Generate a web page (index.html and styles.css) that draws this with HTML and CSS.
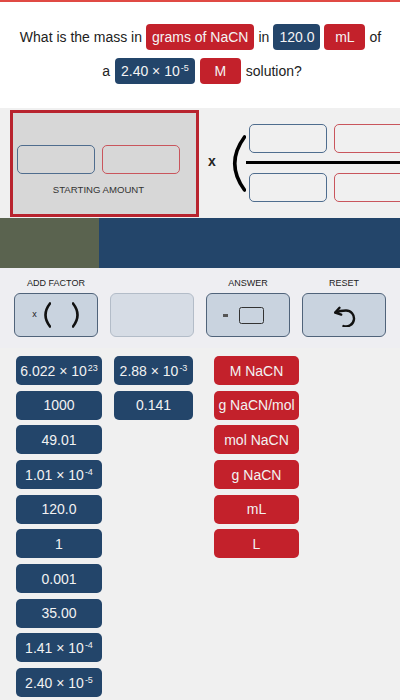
FILE: index.html
```
<!DOCTYPE html>
<html>
<head>
<meta charset="utf-8">
<link rel="stylesheet" href="styles.css">
</head>
<body>
<div class="topline"></div>
<div class="question">
  <div class="qline l1">
    <span>What is the mass in</span>
    <span class="chip red">grams of NaCN</span>
    <span>in</span>
    <span class="chip blue">120.0</span>
    <span class="chip red unit">mL</span>
    <span>of</span>
  </div>
  <div class="qline l2">
    <span>a</span>
    <span class="chip blue"><span>2.40 × 10<sup>-5</sup></span></span>
    <span class="chip red unit">M</span>
    <span>solution?</span>
  </div>
</div>

<div class="workspace">
  <div class="start">
    <div class="slots">
      <div class="slot b"></div>
      <div class="slot r"></div>
    </div>
    <div class="start-label">STARTING AMOUNT</div>
  </div>
  <div class="times">x</div>
  <svg class="paren" width="14" height="57" viewBox="0 0 14 57"><path d="M12.5 2 Q-7 28.5 12.5 55" fill="none" stroke="#000" stroke-width="3.6" stroke-linecap="round"/></svg>
  <div class="fraction">
    <div class="frow">
      <div class="slot b"></div>
      <div class="slot r"></div>
    </div>
    <div class="fline"></div>
    <div class="frow">
      <div class="slot b"></div>
      <div class="slot r"></div>
    </div>
  </div>
</div>

<div class="bar">
  <div class="bar-left"></div>
  <div class="bar-right"></div>
</div>

<div class="controls">
  <div class="ctl">
    <div class="ctl-label">ADD FACTOR</div>
    <div class="ctl-btn">
      <span class="small-x">x</span>
      <svg class="bp" width="8" height="26" viewBox="0 0 8 26"><path d="M7 1.5 Q-2 13 7 24.5" fill="none" stroke="#111" stroke-width="2.6" stroke-linecap="round"/></svg>
      <span class="bp-gap"></span>
      <svg class="bp" width="8" height="26" viewBox="0 0 8 26"><path d="M1 1.5 Q10 13 1 24.5" fill="none" stroke="#111" stroke-width="2.6" stroke-linecap="round"/></svg>
    </div>
  </div>
  <div class="ctl">
    <div class="ctl-label"></div>
    <div class="ctl-btn disabled"></div>
  </div>
  <div class="ctl">
    <div class="ctl-label">ANSWER</div>
    <div class="ctl-btn answer">
      <span class="dash"></span>
      <span class="ans-box"></span>
    </div>
  </div>
  <div class="ctl">
    <div class="ctl-label">RESET</div>
    <div class="ctl-btn">
      <svg width="24" height="24" viewBox="0 0 24 24"><path d="M3.5 9.6 Q8 7.5 14 7.5 A8 8 0 1 1 11.5 23.1" fill="none" stroke="#111" stroke-width="2.4" stroke-linecap="round"/><path d="M7.5 4.8 L3.2 9.6 L9.2 11.6" fill="none" stroke="#111" stroke-width="2.4" stroke-linecap="round" stroke-linejoin="round"/></svg>
    </div>
  </div>
</div>

<div class="tiles">
  <div class="col c1">
    <div class="tile blue"><span>6.022 × 10<sup>23</sup></span></div>
    <div class="tile blue">1000</div>
    <div class="tile blue">49.01</div>
    <div class="tile blue"><span>1.01 × 10<sup>-4</sup></span></div>
    <div class="tile blue">120.0</div>
    <div class="tile blue">1</div>
    <div class="tile blue">0.001</div>
    <div class="tile blue">35.00</div>
    <div class="tile blue"><span>1.41 × 10<sup>-4</sup></span></div>
    <div class="tile blue"><span>2.40 × 10<sup>-5</sup></span></div>
  </div>
  <div class="col c2">
    <div class="tile blue"><span>2.88 × 10<sup>-3</sup></span></div>
    <div class="tile blue">0.141</div>
  </div>
  <div class="col c3">
    <div class="tile red">M NaCN</div>
    <div class="tile red">g NaCN/mol</div>
    <div class="tile red">mol NaCN</div>
    <div class="tile red">g NaCN</div>
    <div class="tile red">mL</div>
    <div class="tile red">L</div>
  </div>
</div>
</body>
</html>
```

FILE: styles.css
```
* { box-sizing: border-box; }
html, body {
  margin: 0;
  padding: 0;
  width: 400px;
  height: 700px;
  overflow: hidden;
  background: #f0f0f0;
  font-family: "Liberation Sans", Arial, sans-serif;
  color: #222;
}

.topline {
  height: 2px;
  background: #e04a44;
}

.question {
  background: #fff;
  padding: 18px 0 20px;
  font-size: 14px;
}
.qline {
  height: 34px;
  display: flex;
  justify-content: center;
  align-items: center;
  gap: 4px;
}
.qline.l1 { padding-left: 1px; }
.qline.l2 { gap: 5px; padding-left: 4px; }

.chip {
  height: 26px;
  padding: 0 6px;
  border-radius: 4px;
  display: inline-flex;
  align-items: center;
  justify-content: center;
  color: #f4f4f4;
}
.chip.unit { min-width: 41px; }
.blue { background: #23456a; }
.red { background: #c3212b; }

sup {
  font-size: 9px;
  line-height: 0;
  vertical-align: 5px;
  margin-left: 1px;
}

.workspace {
  height: 110px;
  background: #f0f0f0;
  display: flex;
  align-items: center;
  overflow: hidden;
}
.start {
  flex-shrink: 0;
  margin-left: 10px;
  width: 189px;
  height: 107px;
  border: 3px solid #b8232e;
  background: #d7d7d7;
  padding: 32px 0 0 4px;
}
.slots, .frow {
  display: flex;
  gap: 7px;
}
.slot {
  flex-shrink: 0;
  width: 78px;
  height: 29px;
  border-radius: 5px;
  border: 1px solid #4f6d8e;
}
.slot.r { border-color: #c9555c; }
.start-label {
  width: 163px;
  margin-top: 10px;
  font-size: 9.6px;
  line-height: 11px;
  text-align: center;
  color: #333;
}
.times {
  flex-shrink: 0;
  margin-left: 9px;
  width: 9px;
  font-size: 14px;
  font-weight: bold;
  color: #222;
  line-height: 14px;
  padding-bottom: 5px;
}
.paren {
  flex-shrink: 0;
  margin-left: 15px;
}
.fraction {
  flex-shrink: 0;
  width: 200px;
}
.frow { padding-left: 3px; }
.fline {
  height: 2.5px;
  background: #000;
  margin: 8px 0 9px;
}

.bar {
  height: 50px;
  display: flex;
}
.bar-left { width: 99px; background: #5a634f; }
.bar-right { flex: 1; background: #23456a; }

.controls {
  background: #eeeef2;
  display: grid;
  grid-template-columns: repeat(4, 84px);
  column-gap: 12px;
  padding: 10px 14px 11px;
}
.ctl-label {
  height: 10px;
  margin-bottom: 5px;
  font-size: 9px;
  line-height: 10px;
  text-align: center;
  color: #222;
}
.ctl-btn {
  height: 44px;
  border: 1px solid #50637a;
  border-radius: 6px;
  background: #c9d3df;
  display: flex;
  align-items: center;
  justify-content: center;
}
.ctl-btn.disabled {
  background: #d6dce5;
  border-color: #b3bcc8;
}
.small-x {
  font-size: 9px;
  line-height: 9px;
  margin-right: 6px;
  color: #222;
  padding-bottom: 1px;
}
.bp-gap { width: 21px; }
.ctl-btn.answer {
  justify-content: flex-start;
  padding-left: 16px;
}
.dash {
  width: 5px;
  height: 3px;
  background: #555;
  margin-right: 11px;
}
.ans-box {
  width: 25px;
  height: 17px;
  border: 1.3px solid #333;
  border-radius: 2.5px;
}

.tiles {
  display: flex;
  align-items: flex-start;
  padding: 8px 0 0 16px;
  background: #f0f0f0;
}
.col {
  display: flex;
  flex-direction: column;
  gap: 5.68px;
}
.c1 { width: 86px; }
.c2 { width: 79px; margin-left: 12px; }
.c3 { width: 85px; margin-left: 21px; }
.tile {
  height: 29px;
  border-radius: 5px;
  display: flex;
  align-items: center;
  justify-content: center;
  font-size: 14px;
  color: #f2f2f2;
  white-space: nowrap;
}
```
